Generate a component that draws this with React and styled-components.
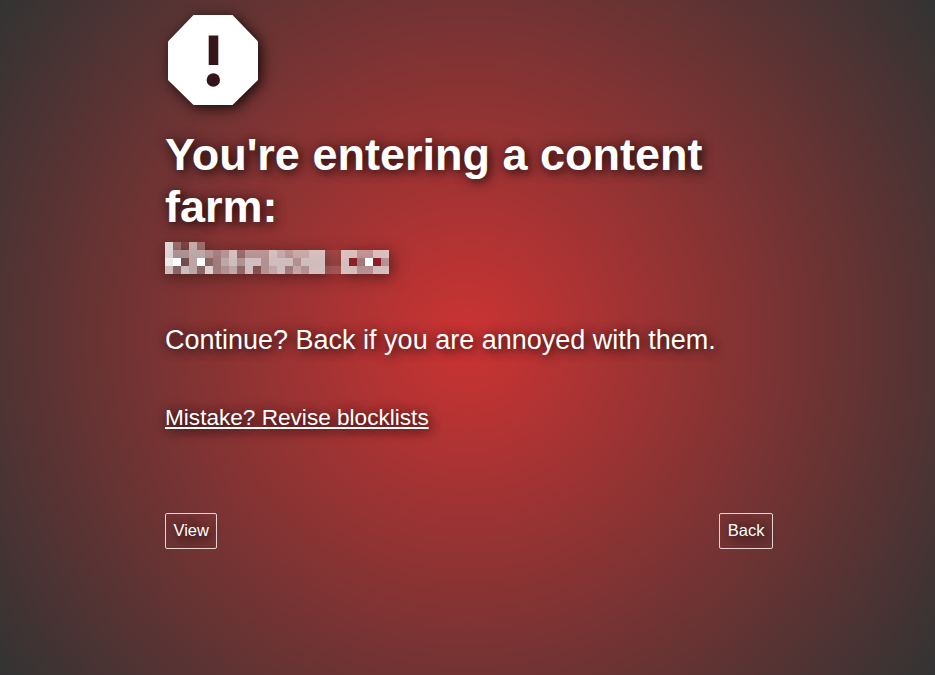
import styled, { createGlobalStyle } from "styled-components";

const GlobalStyle = createGlobalStyle`
  html, body {
    margin: 0;
    height: 100%;
  }

  body {
    font-family: "Liberation Sans", Arial, sans-serif;
    color: #fff;
    background: radial-gradient(circle farthest-corner at 50% 50%, #cc3333 0%, #333333 100%);
  }
`;

const Page = styled.main`
  box-sizing: border-box;
  width: 935px;
  height: 675px;
  overflow: hidden;
  padding: 15px 162px 0 165px;
  text-shadow: 3px 3px 10px rgba(0, 0, 0, 0.55), 0 0 14px rgba(0, 0, 0, 0.45);
`;

const WarningIcon = styled.svg`
  display: block;
  width: 90px;
  height: 90px;
  margin-left: 3px;
  filter: drop-shadow(3px 3px 7px rgba(0, 0, 0, 0.8));
`;

const Title = styled.h1`
  margin: 24px 0 0;
  font-size: 45px;
  line-height: 52px;
  font-weight: 700;
`;

const Mosaic = styled.svg`
  display: block;
  width: 224px;
  height: 32px;
  margin-top: 9px;
  filter: blur(0.6px) drop-shadow(3px 3px 8px rgba(0, 0, 0, 0.7));
`;

const Question = styled.p`
  margin: 50px 0 0;
  font-size: 27px;
  line-height: 32px;
`;

const ReviseLink = styled.a`
  display: inline-block;
  margin-top: 48px;
  font-size: 22.6px;
  line-height: 28px;
  color: #fff;
  text-decoration: underline;
`;

const Actions = styled.div`
  display: flex;
  justify-content: space-between;
  margin-top: 81px;
`;

const ActionButton = styled.button`
  box-sizing: border-box;
  height: 36px;
  padding: 0 7.5px 2px;
  font-family: inherit;
  font-size: 16.5px;
  color: #fff;
  background: transparent;
  border: 1px solid #e8d5d5;
  border-radius: 2px;
  text-shadow: inherit;
`;

// white level of each 8px cell of the blurred-out host name
const mosaicRows = [
  [8, 3, 1, 6, 3],
  [8, 5, 5, 6, 6, 5, 4, 5, 7, 3, 5, 5, 5, 7, 6, 5, 6, 6, 7, 7, 1, 1, 7, 7, 5, 5, 7, 7],
  [9, 10, 2, 6, 10, 3, 4, 6, 7, 5, 7, 7, 5, 7, 7, 7, 5, 7, 7, 7, 1, 1, 7, 0, 4, 10, 0, 5],
  [7, 3, 7, 6, 3, 8, 4, 5, 6, 3, 7, 2, 5, 6, 7, 4, 6, 5, 7, 7, 2, 2, 7, 7, 5, 5, 7, 7],
];

export default function App() {
  return (
    <Page>
      <GlobalStyle />
      <WarningIcon viewBox="0 0 90 90" role="img" aria-label="Warning">
        <polygon
          points="25.5,0 64.5,0 90,26.5 90,65 64.5,90 25.5,90 0,65 0,26.5"
          fill="#fff"
        />
        <rect x="40.7" y="20.5" width="9.6" height="29.5" fill="#35141a" />
        <circle cx="45.3" cy="65" r="6.7" fill="#35141a" />
      </WarningIcon>
      <Title>You're entering a content farm:</Title>
      <Mosaic viewBox="0 0 224 32" role="img" aria-label="Blurred site name">
        {mosaicRows.map((row, y) =>
          row.map((level, x) =>
            level === 0 ? (
              <rect key={`${x}-${y}`} x={x * 8} y={y * 8} width="8" height="8" fill="#8a1f28" />
            ) : (
              <rect
                key={`${x}-${y}`}
                x={x * 8}
                y={y * 8}
                width="8"
                height="8"
                fill="#fff"
                fillOpacity={level / 10}
              />
            )
          )
        )}
      </Mosaic>
      <Question>Continue? Back if you are annoyed with them.</Question>
      <ReviseLink href="#">Mistake? Revise blocklists</ReviseLink>
      <Actions>
        <ActionButton>View</ActionButton>
        <ActionButton>Back</ActionButton>
      </Actions>
    </Page>
  );
}
